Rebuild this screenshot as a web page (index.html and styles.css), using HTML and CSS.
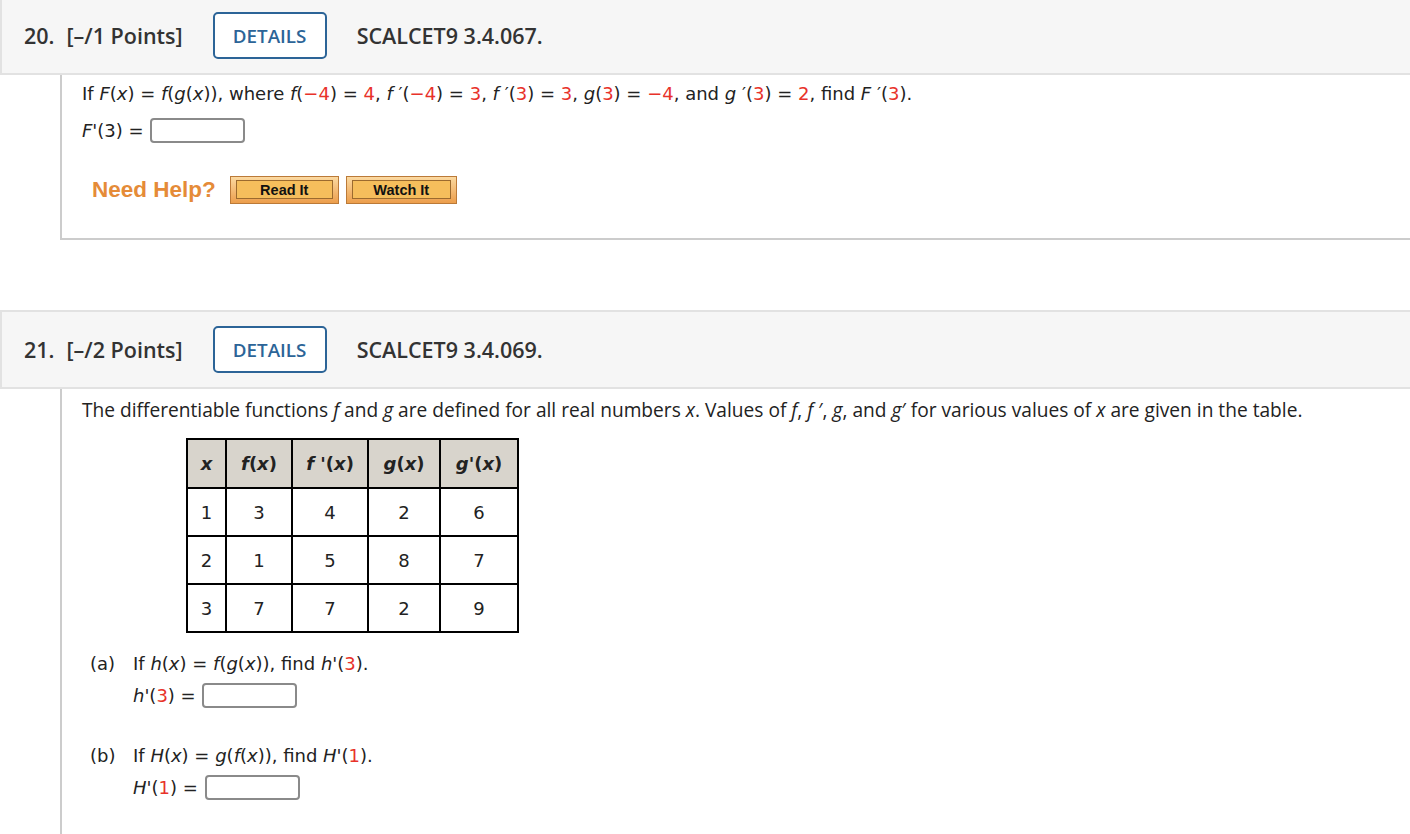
FILE: index.html
```html
<!DOCTYPE html>
<html lang="en">
<head>
<meta charset="utf-8">
<title>Questions</title>
<link rel="stylesheet" href="styles.css">
</head>
<body>
<div class="page">
  <section class="question">
    <header class="q-head">
      <span class="q-num">20.</span>
      <span class="q-pts">[–/1 Points]</span>
      <span class="details">DETAILS</span>
      <span class="q-code">SCALCET9 3.4.067.</span>
    </header>
    <div class="q-body q-body-1">
      <p class="math line">If <i>F</i>(<i>x</i>) = <i>f</i>(<i>g</i>(<i>x</i>)), where <i>f</i>(<span class="r">−4</span>) = <span class="r">4</span>, <i>f</i> ′(<span class="r">−4</span>) = <span class="r">3</span>, <i>f</i> ′(<span class="r">3</span>) = <span class="r">3</span>, <i>g</i>(<span class="r">3</span>) = <span class="r">−4</span>, and <i>g</i> ′(<span class="r">3</span>) = <span class="r">2</span>, find <i>F</i> ′(<span class="r">3</span>).</p>
      <p class="math answer"><i>F</i>'(3) = <span class="box"></span></p>
      <div class="help">
        <span class="help-label">Need Help?</span>
        <span class="hbtn hbtn-read"><span class="hbtn-in">Read It</span></span>
        <span class="hbtn hbtn-watch"><span class="hbtn-in">Watch It</span></span>
      </div>
    </div>
  </section>

  <section class="question q2">
    <header class="q-head">
      <span class="q-num">21.</span>
      <span class="q-pts">[–/2 Points]</span>
      <span class="details">DETAILS</span>
      <span class="q-code">SCALCET9 3.4.069.</span>
    </header>
    <div class="q-body q-body-2">
      <p class="intro">The differentiable functions <i>f</i> and <i>g</i> are defined for all real numbers <i>x</i>. Values of <i>f</i>, <i>f</i> ′, <i>g</i>, and <i>g</i>′ for various values of <i>x</i> are given in the table.</p>
      <table class="vals math">
        <thead>
          <tr><th class="c1"><i>x</i></th><th class="c2"><i>f</i>(<i>x</i>)</th><th class="c3"><i>f</i> '(<i>x</i>)</th><th class="c4"><i>g</i>(<i>x</i>)</th><th class="c5"><i>g</i>'(<i>x</i>)</th></tr>
        </thead>
        <tbody>
          <tr><td>1</td><td>3</td><td>4</td><td>2</td><td>6</td></tr>
          <tr><td>2</td><td>1</td><td>5</td><td>8</td><td>7</td></tr>
          <tr><td>3</td><td>7</td><td>7</td><td>2</td><td>9</td></tr>
        </tbody>
      </table>
      <div class="part part-a">
        <p class="math line"><span class="plabel">(a)</span>If <i>h</i>(<i>x</i>) = <i>f</i>(<i>g</i>(<i>x</i>)), find <i>h</i>'(<span class="r">3</span>).</p>
        <p class="math answer sub"><i>h</i>'(<span class="r">3</span>) = <span class="box"></span></p>
      </div>
      <div class="part part-b">
        <p class="math line"><span class="plabel">(b)</span>If <i>H</i>(<i>x</i>) = <i>g</i>(<i>f</i>(<i>x</i>)), find <i>H</i>'(<span class="r">1</span>).</p>
        <p class="math answer sub"><i>H</i>'(<span class="r">1</span>) = <span class="box"></span></p>
      </div>
    </div>
  </section>
</div>
</body>
</html>
```

FILE: styles.css
```css
html, body {
  margin: 0;
  padding: 0;
  background: #ffffff;
}
body {
  font-family: "Open Sans", "Liberation Sans", sans-serif;
  color: #222;
  overflow: hidden;
  height: 834px;
}
.page {
  margin-top: -4px;
}
p { margin: 0; }

.q-head {
  display: flex;
  align-items: center;
  height: 75px;
  border-top: 2px solid #e2e2e2;
  border-bottom: 2px solid #e2e2e2;
  border-left: 2px solid #e2e2e2;
  background: #f6f6f6;
  padding-left: 22px;
  color: #333;
  font-family: "Open Sans", sans-serif;
  font-weight: 600;
  font-size: 21.5px;
  white-space: nowrap;
}
.q-num { margin-right: 12px; }
.q-pts { margin-right: 30px; }
.details {
  display: inline-flex;
  align-items: center;
  justify-content: center;
  box-sizing: border-box;
  width: 114px;
  height: 47px;
  border: 2px solid #2c6497;
  border-radius: 5px;
  background: #fff;
  color: #2c6497;
  font-size: 18.8px;
  font-weight: 600;
  margin-right: 30px;
  padding-top: 1px;
}

.q-body {
  margin-left: 60px;
  border-left: 2px solid #cccccc;
  padding-left: 20px;
}
.q-body-1 {
  border-bottom: 2px solid #cccccc;
  padding-top: 7px;
  padding-bottom: 34px;
}
.math {
  font-family: "DejaVu Sans", sans-serif;
  font-size: 18px;
  color: #222;
}
.math i { font-style: italic; }
.r { color: #e8322a; }
.line {
  line-height: 24px;
  height: 24px;
  white-space: nowrap;
}
.answer {
  display: flex;
  align-items: center;
  height: 25px;
  margin-top: 12px;
  white-space: pre;
}
.box {
  display: inline-block;
  box-sizing: border-box;
  width: 95px;
  height: 25px;
  border: 2px solid #8a8a8a;
  border-radius: 4px;
  background: #fff;
  margin-left: 1px;
}

.help {
  display: flex;
  align-items: center;
  margin-top: 33px;
  height: 28px;
  padding-left: 10px;
}
.help-label {
  font-family: "Liberation Sans", Arial, sans-serif;
  font-weight: bold;
  font-size: 22.5px;
  color: #e58b38;
  margin-right: 14px;
}
.hbtn {
  display: inline-block;
  box-sizing: border-box;
  height: 28px;
  border: 1px solid #bb7a38;
  background: linear-gradient(#fbd9a0, #ec9e4c);
  padding: 3px 5px 4px 5px;
  margin-right: 7px;
}
.hbtn-read { width: 109px; }
.hbtn-watch { width: 111px; }
.hbtn-in {
  display: flex;
  align-items: center;
  justify-content: center;
  box-sizing: border-box;
  height: 19px;
  border: 1px solid #9b6a2e;
  background: #f5be5c;
  font-family: "Liberation Sans", Arial, sans-serif;
  font-weight: bold;
  font-size: 14.5px;
  color: #111;
  padding-top: 1px;
}

.q2 {
  margin-top: 70px;
}
.q-body-2 {
  padding-top: 9px;
  padding-bottom: 40px;
}
.intro {
  font-family: "Open Sans", "Liberation Sans", sans-serif;
  font-size: 19.15px;
  line-height: 24px;
  height: 24px;
  color: #222;
  white-space: nowrap;
}
.vals {
  margin-top: 16px;
  margin-left: 104px;
  border-collapse: collapse;
  border: 2px solid #000;
}
.vals th, .vals td {
  border: 2px solid #000;
  height: 46px;
  padding: 0;
  text-align: center;
  font-weight: normal;
}
.vals th {
  height: 47px;
  background: #d8d4cc;
  font-weight: bold;
}
.vals .c1 { width: 37px; }
.vals .c2 { width: 64px; }
.vals .c3 { width: 74px; }
.vals .c4 { width: 70px; }
.vals .c5 { width: 76px; }

.part-a { margin-top: 19px; }
.part-b { margin-top: 36px; }
.plabel {
  display: inline-block;
  width: 43px;
  margin-left: 8px;
}
.sub {
  margin-left: 51px;
  margin-top: 7px;
}
```
